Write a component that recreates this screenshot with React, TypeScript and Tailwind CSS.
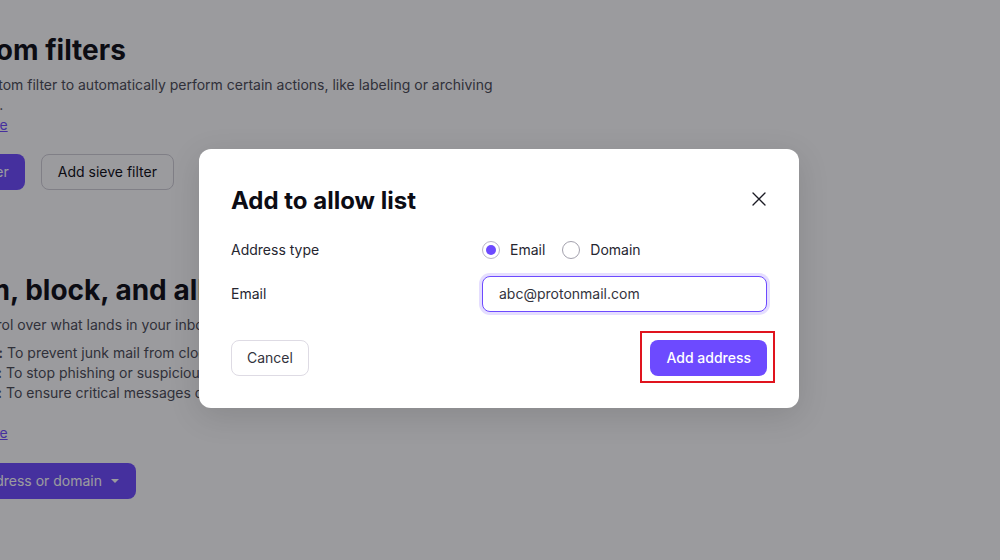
import React from "react";

function CloseIcon() {
  return (
    <svg width="16" height="16" viewBox="0 0 16 16" fill="none" aria-hidden="true">
      <path d="M2 2L14 14M14 2L2 14" stroke="#1b1b24" strokeWidth="1.3" strokeLinecap="round" />
    </svg>
  );
}

function Radio({ checked, label }: { checked: boolean; label: string }) {
  return (
    <label className="flex items-center gap-[10px]">
      <span
        className={
          checked
            ? "flex h-[18px] w-[18px] items-center justify-center rounded-full border border-[#b9b5c8] bg-white"
            : "flex h-[18px] w-[18px] items-center justify-center rounded-full border border-[#a3a1ad] bg-white"
        }
      >
        {checked && <span className="h-[10px] w-[10px] rounded-full bg-[#6d4aff]" />}
      </span>
      <span className="text-sm text-[#262630]">{label}</span>
    </label>
  );
}

export default function App() {
  return (
    <div
      className="relative h-[560px] w-[1000px] overflow-hidden bg-white"
      style={{ fontFamily: "Inter, 'Noto Sans', sans-serif" }}
    >
      {/* Background page content */}
      <div className="ml-[-68px] w-[600px] pt-[33px] text-[#0c0c14]">
        <h2 className="text-[28px] font-bold leading-[34px]">Custom filters</h2>
        <p className="mt-[8px] text-sm leading-5 text-[#4a4b55]">
          Add a custom filter to automatically perform certain actions, like labeling or archiving messages.
          <br />
          <a className="text-[#6d4aff] underline">Learn more</a>
        </p>
        <div className="mt-[19px] flex gap-4">
          <button className="h-9 rounded-lg bg-[#6d4aff] px-4 text-sm text-white">Add filter</button>
          <button className="h-9 rounded-lg border border-[#d1cfd7] px-4 text-sm text-[#0c0c14]">
            Add sieve filter
          </button>
        </div>

        <h2 className="mt-[83px] text-[28px] font-bold leading-[34px]">Spam, block, and allow lists</h2>
        <p className="mt-[8px] text-sm leading-5 text-[#4a4b55]">
          Take control over what lands in your inbox by creating the following lists:
        </p>
        <ul className="mt-[8px] pl-[28px] text-sm leading-5 text-[#4a4b55]">
          <li>
            <span className="font-semibold">Spam:</span> To prevent junk mail from clogging up your inbox
          </li>
          <li>
            <span className="font-semibold">Block:</span> To stop phishing or suspicious emails from entering your
            email system
          </li>
          <li>
            <span className="font-semibold">Allow:</span> To ensure critical messages don't end up in spam
          </li>
        </ul>
        <p className="mt-[20px] text-sm leading-5">
          <a className="text-[#6d4aff] underline">Learn more</a>
        </p>
        <div className="mt-[20px] flex">
          <button className="flex h-9 items-center gap-2 rounded-lg bg-[#6d4aff] px-4 text-sm text-white">
            Add address or domain
            <svg width="10" height="6" viewBox="0 0 10 6" aria-hidden="true">
              <path d="M1 1L5 5L9 1Z" fill="currentColor" />
            </svg>
          </button>
        </div>
      </div>

      {/* Backdrop + modal */}
      <div className="absolute inset-0 flex items-start justify-center bg-[rgba(12,12,20,0.41)] pr-[2px] pt-[149px]">
        <div className="w-[600px] rounded-xl bg-white px-8 pb-8 pt-[36px] shadow-[0_8px_32px_rgba(0,0,0,0.12)]">
          <div className="flex items-start justify-between">
            <h1 className="text-[24px] font-bold leading-8 text-[#0c0c14]">Add to allow list</h1>
            <button className="mt-[6px] flex h-4 w-4 items-center justify-center">
              <CloseIcon />
            </button>
          </div>

          <div className="mt-[15px] flex h-9 items-center">
            <div className="w-[251px] text-sm text-[#262630]">Address type</div>
            <div className="flex items-center gap-[17px]">
              <Radio checked label="Email" />
              <Radio checked={false} label="Domain" />
            </div>
          </div>

          <div className="mt-2 flex h-9 items-center">
            <div className="w-[251px] text-sm text-[#262630]">Email</div>
            <div className="flex h-9 flex-1 items-center rounded-lg border border-[#6d4aff] bg-white px-4 text-sm text-[#33333d] shadow-[0_0_0_3px_rgba(109,74,255,0.18)]">
              abc@protonmail.com
            </div>
          </div>

          <div className="mt-[28px] flex items-center justify-between">
            <button className="h-9 rounded-lg border border-[#dedbe4] bg-white px-[15px] text-sm text-[#33333d]">
              Cancel
            </button>
            <div className="relative">
              <button className="h-9 rounded-lg bg-[#6d4aff] px-4 text-sm font-medium text-white">
                Add address
              </button>
              <div className="pointer-events-none absolute bottom-[-7px] left-[-10px] right-[-8px] top-[-9px] border-2 border-[#e0141e]" />
            </div>
          </div>
        </div>
      </div>
    </div>
  );
}
